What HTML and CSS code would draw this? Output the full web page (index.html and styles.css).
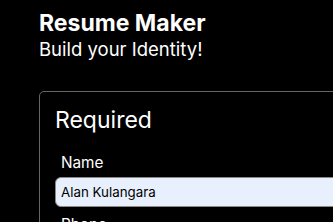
FILE: index.html
```html
<!DOCTYPE html>
<html>
<head>
<meta charset="utf-8">
<link rel="stylesheet" href="styles.css">
</head>
<body>
<div class="page">
  <header class="hero">
    <h1 class="title">Resume Maker</h1>
    <p class="subtitle">Build your Identity!</p>
  </header>
  <section class="card">
    <h2 class="card-title">Required</h2>
    <label class="field">
      <span class="label">Name</span>
      <input class="input" type="text" value="Alan Kulangara">
    </label>
    <label class="field">
      <span class="label">Phone</span>
      <input class="input" type="text" value="">
    </label>
  </section>
</div>
</body>
</html>
```
FILE: styles.css
```css
html, body {
  margin: 0;
  padding: 0;
  background: #000;
  overflow: hidden;
}
body {
  font-family: Inter, "Noto Sans", sans-serif;
  color: #fff;
}
.page {
  padding: 9px 0 0 39px;
  width: 420px;
}
.hero {
  display: flex;
  flex-direction: column;
}
.title {
  margin: 0;
  font-size: 23px;
  font-weight: 700;
  line-height: 29px;
}
.subtitle {
  margin: 0;
  font-size: 18.5px;
  font-weight: 400;
  line-height: 22px;
}
.card {
  margin-top: 31px;
  border: 1px solid #666;
  border-radius: 5px;
  padding: 12px 15px;
  display: flex;
  flex-direction: column;
}
.card-title {
  margin: 0 0 17px;
  font-size: 23px;
  font-weight: 400;
  line-height: 32px;
}
.field {
  display: flex;
  flex-direction: column;
  gap: 4px;
  margin-bottom: 8px;
}
.label {
  padding-left: 6px;
  font-size: 15.3px;
  line-height: 20px;
}
.input {
  box-sizing: border-box;
  height: 30px;
  border: 1px solid #888;
  border-radius: 6px;
  background: #e8f0fe;
  padding: 0 5px;
  font-family: Inter, "Noto Sans", sans-serif;
  font-size: 13.33px;
  color: #000;
  outline: none;
}
```
